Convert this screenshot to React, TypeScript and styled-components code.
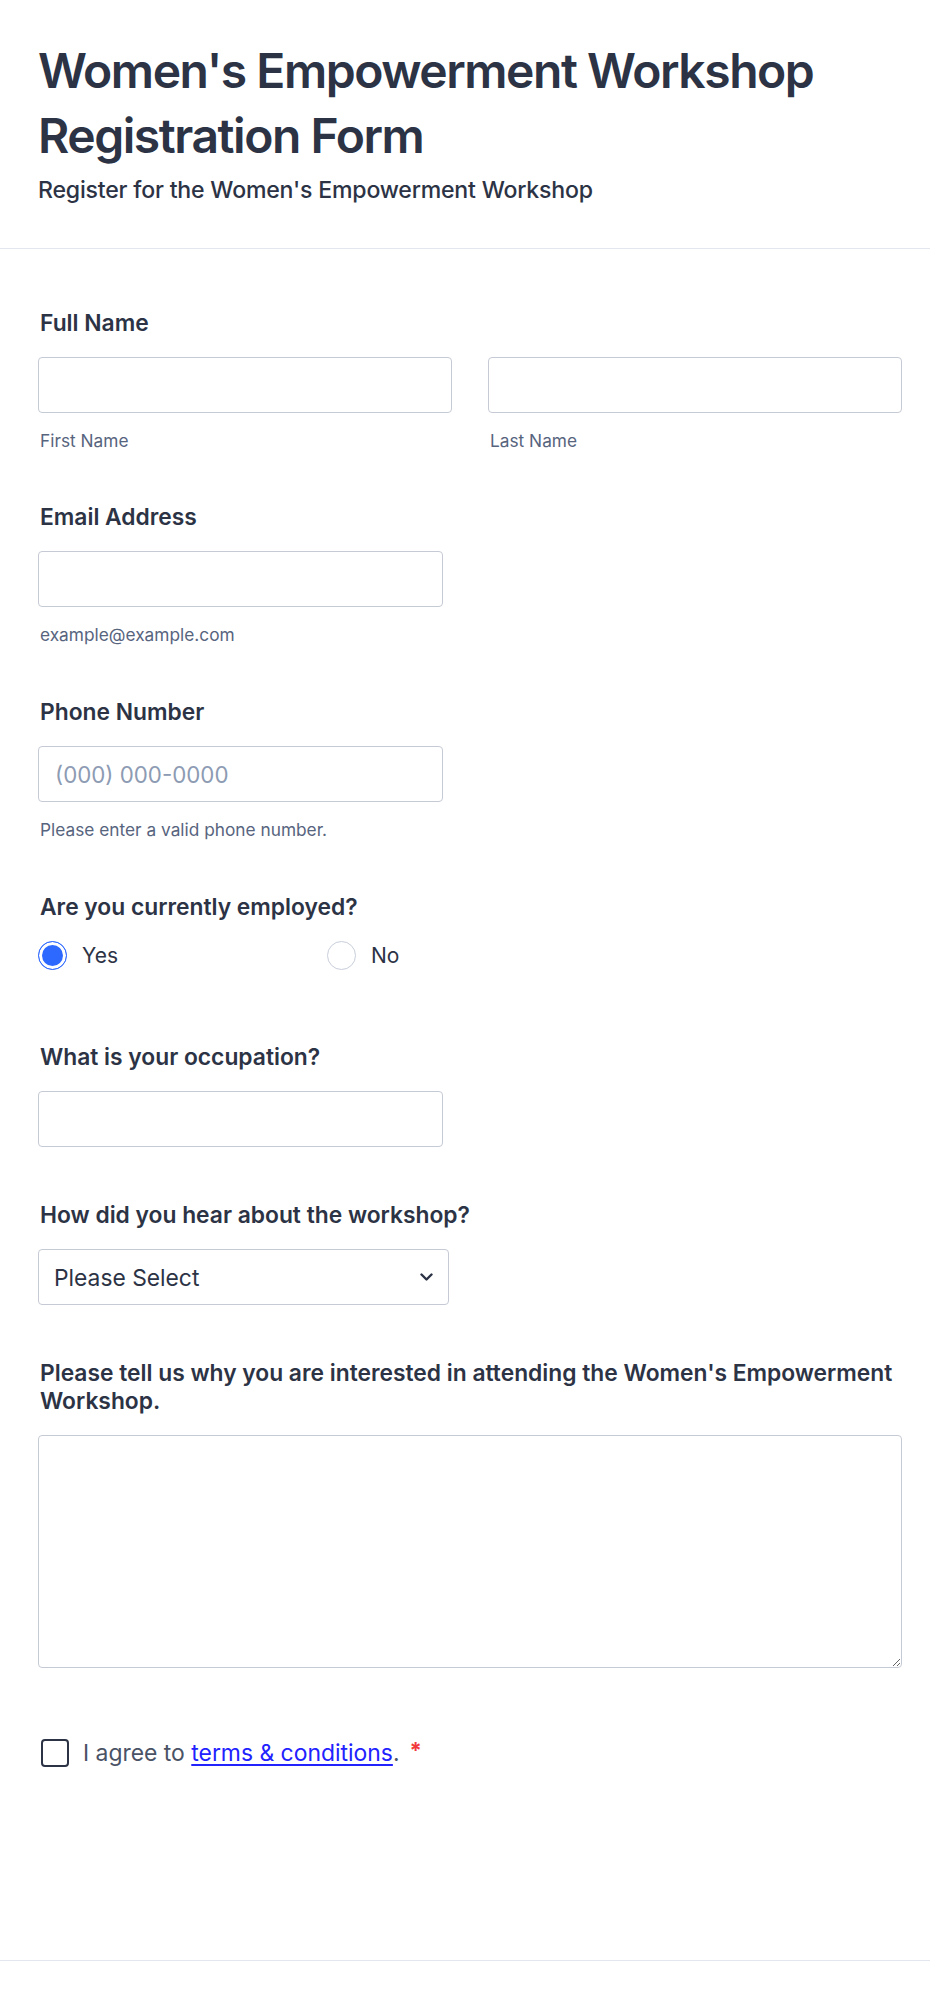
import React from "react";
import styled, { createGlobalStyle } from "styled-components";

const GlobalStyle = createGlobalStyle`
  html, body { margin: 0; padding: 0; background: #ffffff; }
  body { font-family: Inter, "Noto Sans", sans-serif; color: #2c3345; }
  *, *::before, *::after { box-sizing: border-box; }
`;

const Page = styled.div`
  width: 930px;
  min-height: 1994px;
  background: #ffffff;
`;

const Header = styled.header`
  padding: 38px 28px 44px 38px;
  border-bottom: 1px solid #e3e6ec;
`;

const Title = styled.h1`
  margin: 0;
  font-size: 48px;
  line-height: 65px;
  font-weight: 600;
  letter-spacing: -1.45px;
  color: #2c3345;
`;

const Subtitle = styled.p`
  margin: 8px 0 0;
  font-size: 23.1px;
  line-height: 28px;
  font-weight: 500;
  letter-spacing: -0.2px;
  color: #2c3345;
`;

const Form = styled.form`
  height: 1712px;
  padding: 60px 28px 0 38px;
  border-bottom: 1px solid #e3e6ec;
  display: flex;
  flex-direction: column;
`;

const Field = styled.div<{ $after: number }>`
  display: flex;
  flex-direction: column;
  align-items: flex-start;
  margin-bottom: ${(p) => p.$after}px;
`;

const Label = styled.label`
  display: block;
  margin: 0 0 20px 2px;
  font-size: 22.8px;
  line-height: 28px;
  font-weight: 600;
  color: #2c3345;
`;

const NameRow = styled.div`
  display: grid;
  grid-template-columns: 414px 414px;
  column-gap: 36px;
  width: 864px;
`;

const Column = styled.div`
  display: flex;
  flex-direction: column;
`;

const TextInput = styled.input<{ $w?: number }>`
  width: ${(p) => (p.$w ? `${p.$w}px` : "100%")};
  height: 56px;
  padding: 0 16px;
  border: 1px solid #c5cad5;
  border-radius: 4px;
  background: #ffffff;
  font-family: Inter, "Noto Sans", sans-serif;
  font-size: 22.3px;
  color: #2c3345;
  outline: none;
  &::placeholder { color: #8d9bb3; }
`;

const SubLabel = styled.span`
  display: block;
  margin: 16px 0 0 2px;
  font-size: 17.3px;
  line-height: 24px;
  font-weight: 400;
  color: #57647e;
`;

const RadioRow = styled.div`
  display: grid;
  grid-template-columns: 289px auto;
  align-items: center;
  height: 28px;
`;

const RadioOption = styled.label`
  display: flex;
  align-items: center;
  gap: 15px;
  font-size: 21px;
  line-height: 28px;
  color: #2c3345;
`;

const RadioDot = styled.span<{ $on?: boolean }>`
  width: 29px;
  height: 29px;
  border-radius: 50%;
  border: ${(p) => (p.$on ? "1.5px solid #2e69ff" : "1.5px solid #c8ceda")};
  background: ${(p) => (p.$on ? "#2e69ff" : "#ffffff")};
  box-shadow: ${(p) => (p.$on ? "inset 0 0 0 3px #ffffff" : "none")};
  flex: none;
`;

const SelectWrap = styled.div`
  position: relative;
  width: 411px;
  height: 56px;
`;

const Select = styled.select`
  appearance: none;
  -webkit-appearance: none;
  width: 100%;
  height: 56px;
  padding: 0 40px 0 15px;
  border: 1px solid #c5cad5;
  border-radius: 4px;
  background: #ffffff;
  font-family: Inter, "Noto Sans", sans-serif;
  font-size: 22.8px;
  color: #2c3345;
  outline: none;
`;

const Chevron = styled.svg`
  position: absolute;
  right: 16px;
  top: 24px;
  width: 13px;
  height: 8px;
  pointer-events: none;
`;

const TextArea = styled.textarea`
  width: 864px;
  height: 233px;
  padding: 12px 16px;
  border: 1px solid #c5cad5;
  border-radius: 4px;
  resize: vertical;
  font-family: Inter, "Noto Sans", sans-serif;
  font-size: 22px;
  color: #2c3345;
  outline: none;
`;

const CheckRow = styled.label`
  display: flex;
  align-items: center;
  gap: 14px;
  margin-left: 3px;
  font-size: 22.9px;
  line-height: 28px;
  color: #4a5366;
`;

const CheckBox = styled.input`
  appearance: none;
  -webkit-appearance: none;
  margin: 0;
  width: 28px;
  height: 28px;
  border: 2px solid #2c3345;
  border-radius: 4px;
  background: #ffffff;
  flex: none;
`;

const TermsLink = styled.a`
  color: #2222ff;
  text-decoration: underline;
  text-underline-offset: 3px;
`;

const Required = styled.span`
  color: #f23a3c;
  font-weight: 700;
  font-size: 22px;
  margin-left: 10px;
  position: relative;
  top: -3px;
`;

export default function App() {
  return (
    <>
      <GlobalStyle />
      <Page>
        <Header>
          <Title>
            Women's Empowerment Workshop
            <br />
            Registration Form
          </Title>
          <Subtitle>Register for the Women's Empowerment Workshop</Subtitle>
        </Header>
        <Form onSubmit={(e) => e.preventDefault()}>
          <Field $after={50}>
            <Label>Full Name</Label>
            <NameRow>
              <Column>
                <TextInput type="text" />
                <SubLabel>First Name</SubLabel>
              </Column>
              <Column>
                <TextInput type="text" />
                <SubLabel>Last Name</SubLabel>
              </Column>
            </NameRow>
          </Field>

          <Field $after={51}>
            <Label>Email Address</Label>
            <TextInput type="email" $w={405} />
            <SubLabel>example@example.com</SubLabel>
          </Field>

          <Field $after={51}>
            <Label>Phone Number</Label>
            <TextInput type="tel" $w={405} placeholder="(000) 000-0000" />
            <SubLabel>Please enter a valid phone number.</SubLabel>
          </Field>

          <Field $after={74}>
            <Label>Are you currently employed?</Label>
            <RadioRow>
              <RadioOption>
                <RadioDot $on />
                Yes
              </RadioOption>
              <RadioOption>
                <RadioDot />
                No
              </RadioOption>
            </RadioRow>
          </Field>

          <Field $after={54}>
            <Label>What is your occupation?</Label>
            <TextInput type="text" $w={405} />
          </Field>

          <Field $after={54}>
            <Label>How did you hear about the workshop?</Label>
            <SelectWrap>
              <Select defaultValue="">
                <option value="">Please Select</option>
                <option>Social Media</option>
                <option>Friend</option>
                <option>Website</option>
              </Select>
              <Chevron viewBox="0 0 13 8" fill="none">
                <path d="M1.5 1.5l5 5 5-5" stroke="#2c3345" strokeWidth="2.4" strokeLinecap="round" strokeLinejoin="round" />
              </Chevron>
            </SelectWrap>
          </Field>

          <Field $after={71}>
            <Label>
              Please tell us why you are interested in attending the Women's Empowerment Workshop.
            </Label>
            <TextArea />
          </Field>

          <CheckRow>
            <CheckBox type="checkbox" />
            <span>
              I agree to <TermsLink href="#">terms &amp; conditions</TermsLink>.
              <Required>*</Required>
            </span>
          </CheckRow>
        </Form>
      </Page>
    </>
  );
}
